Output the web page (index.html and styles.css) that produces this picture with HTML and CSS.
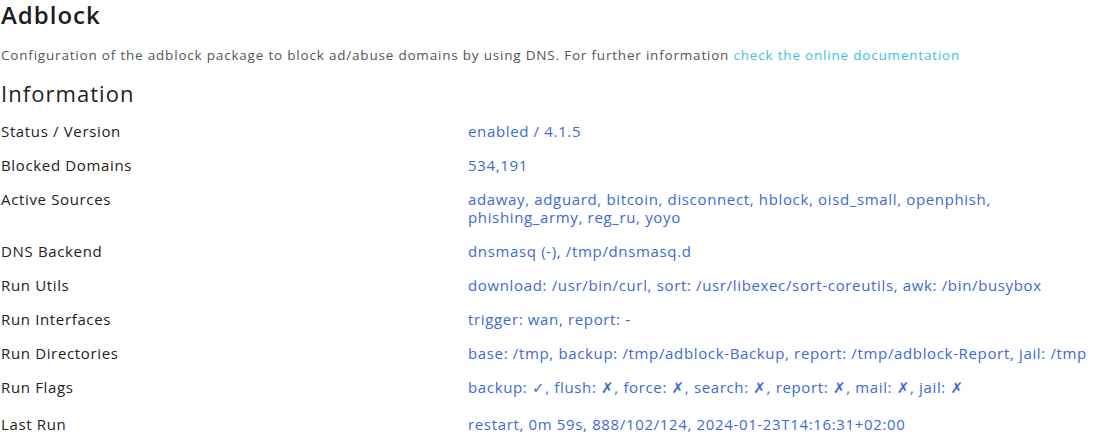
FILE: index.html
```html
<!DOCTYPE html>
<html>
<head>
<meta charset="utf-8">
<link rel="stylesheet" href="styles.css">
</head>
<body>
<div class="page">
  <h2 class="title">Adblock</h2>
  <p class="desc">Configuration of the adblock package to block ad/abuse domains by using DNS. For further information <a class="link" href="#">check the online documentation</a></p>
  <h3 class="section">Information</h3>
  <div class="table">
    <div class="row"><div class="label">Status / Version</div><div class="value">enabled / 4.1.5</div></div>
    <div class="row"><div class="label">Blocked Domains</div><div class="value">534,191</div></div>
    <div class="row"><div class="label">Active Sources</div><div class="value">adaway, adguard, bitcoin, disconnect, hblock, oisd_small, openphish,<br>phishing_army, reg_ru, yoyo</div></div>
    <div class="row"><div class="label">DNS Backend</div><div class="value">dnsmasq (-), /tmp/dnsmasq.d</div></div>
    <div class="row"><div class="label">Run Utils</div><div class="value">download: /usr/bin/curl, sort: /usr/libexec/sort-coreutils, awk: /bin/busybox</div></div>
    <div class="row"><div class="label">Run Interfaces</div><div class="value">trigger: wan, report: -</div></div>
    <div class="row"><div class="label">Run Directories</div><div class="value">base: /tmp, backup: /tmp/adblock-Backup, report: /tmp/adblock-Report, jail: /tmp</div></div>
    <div class="row row-flags"><div class="label">Run Flags</div><div class="value">backup: <span class="mark">✓</span>, flush: <span class="mark">✗</span>, force: <span class="mark">✗</span>, search: <span class="mark">✗</span>, report: <span class="mark">✗</span>, mail: <span class="mark">✗</span>, jail: <span class="mark">✗</span></div></div>
    <div class="row"><div class="label">Last Run</div><div class="value">restart, 0m 59s, 888/102/124, 2024-01-23T14:16:31+02:00</div></div>
  </div>
</div>
</body>
</html>
```

FILE: styles.css
```css
html, body {
  margin: 0;
  padding: 0;
  background: #ffffff;
}
.page {
  padding-left: 1px;
  font-family: "Open Sans", Lato, sans-serif;
  color: #222222;
}
.title {
  margin: 0;
  padding-top: 0;
  font-size: 24px;
  font-weight: 600;
  line-height: 30px;
  letter-spacing: 1px;
  color: #1e1e1e;
}
.desc {
  margin: 0;
  padding-top: 16px;
  font-size: 13.5px;
  line-height: 18px;
  letter-spacing: 0.8px;
  color: #555555;
}
.link {
  color: #3cc0e0;
  text-decoration: none;
}
.section {
  margin: 0;
  padding-top: 16px;
  font-size: 22px;
  font-weight: 500;
  line-height: 26px;
  letter-spacing: 1.05px;
  color: #1e1e1e;
}
.table {
  display: flex;
  flex-direction: column;
  padding-top: 8px;
}
.row {
  display: flex;
  padding: 8px 0;
  font-size: 15px;
  line-height: 18px;
  letter-spacing: 0.65px;
}
.row-flags {
  padding-bottom: 10px;
}
.label {
  width: 467px;
  flex: none;
  color: #222222;
}
.value {
  color: #3d6ad6;
}
.mark {
  font-family: "DejaVu Sans", sans-serif;
  font-weight: bold;
  line-height: 18px;
}
```
